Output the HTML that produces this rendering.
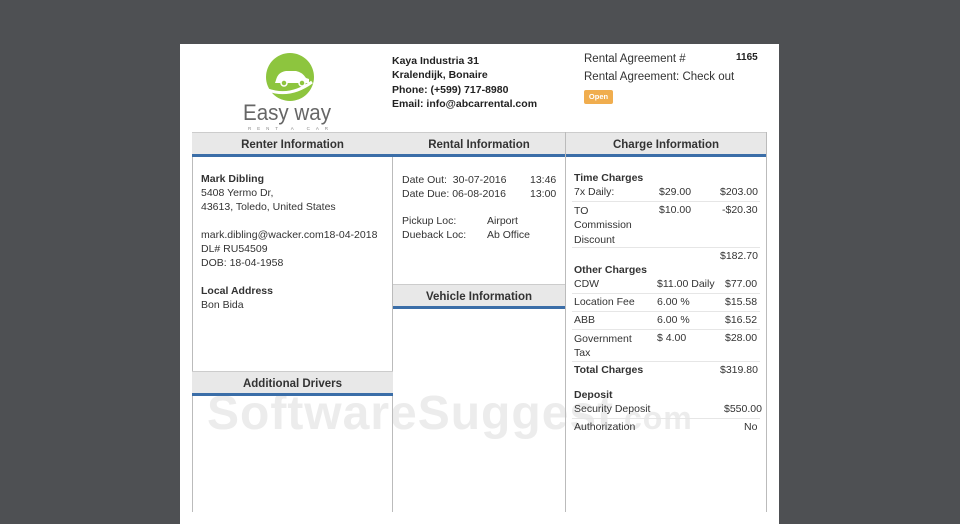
<!DOCTYPE html>
<html><head><style>
*{margin:0;padding:0;box-sizing:border-box}
body{width:960px;height:512px;background:#4e5053;position:relative;overflow:hidden;font-family:"Liberation Sans",sans-serif;color:#333;font-size:10.5px}
.page{position:absolute;left:180px;top:44px;width:599px;height:480px;background:#fff}
.a{position:absolute;white-space:nowrap}
.b{font-weight:bold}
.hd{position:absolute;height:25px;background:#e8e8e8;border-bottom:3px solid #3b6ea8;font-weight:bold;font-size:11.5px;text-align:center;line-height:24px;color:#333;border-top:1px solid #ccc}
.vl{position:absolute;width:1px;background:#bbb}
.hl{position:absolute;height:1px;background:#e6e6e6}
</style></head><body>
<div class="page"></div>
<!-- watermark -->
<div class="a b" style="left:207px;top:386px;font-size:48px;color:#ececec;letter-spacing:1px">SoftwareSuggest<span style="font-size:32px">.com</span></div>
<!-- logo -->
<svg class="a" style="left:240px;top:52px" width="96" height="80" viewBox="0 0 96 80">
<circle cx="50" cy="25" r="24" fill="#8dc53e"/>
<path d="M36 28 q2-8 10-9 h10 q6 1 10 7 l3 1 v4 h-34 z" fill="#fff"/>
<circle cx="44" cy="31" r="3" fill="#8dc53e" stroke="#fff" stroke-width="1.5"/>
<circle cx="62" cy="31" r="3" fill="#8dc53e" stroke="#fff" stroke-width="1.5"/>
<path d="M28 38 q22 8 44-8" stroke="#fff" stroke-width="3" fill="none"/>
<text x="3" y="68" font-family="Liberation Sans" font-size="22" fill="#666" textLength="88" lengthAdjust="spacingAndGlyphs">Easy way</text>
<text x="8" y="78" font-family="Liberation Sans" font-size="4.5" fill="#888" textLength="80">RENT A CAR</text>
</svg>
<div class="a b" style="left:392px;top:54px;line-height:14.3px;font-size:10.5px;color:#222">Kaya Industria 31<br>Kralendijk, Bonaire<br>Phone: (+599) 717-8980<br>Email: info@abcarrental.com</div>
<div class="a" style="left:584px;top:53px;font-size:11.5px;color:#333">Rental Agreement #</div>
<div class="a b" style="left:736px;top:52px;font-size:10px;color:#222">1165</div>
<div class="a" style="left:584px;top:71px;font-size:11.5px;color:#333">Rental Agreement: Check out</div>
<div class="a" style="left:584px;top:90px;width:29px;height:14px;background:#f0ad4e;border-radius:2px;color:#fff;font-size:7.5px;font-weight:bold;text-align:center;line-height:14px">Open</div>
<!-- column lines -->
<div class="vl" style="left:192px;top:132px;height:380px"></div>
<div class="vl" style="left:392px;top:132px;height:380px"></div>
<div class="vl" style="left:565px;top:132px;height:380px"></div>
<div class="vl" style="left:766px;top:132px;height:380px"></div>
<div class="hd" style="left:192px;top:132px;width:201px">Renter Information</div>
<div class="hd" style="left:393px;top:132px;width:172px">Rental Information</div>
<div class="hd" style="left:566px;top:132px;width:200px">Charge Information</div>
<div class="hd" style="left:393px;top:284px;width:172px">Vehicle Information</div>
<div class="hd" style="left:192px;top:371px;width:201px">Additional Drivers</div>
<!-- renter -->
<div class="a" style="left:201px;top:172px;line-height:14px">
<span class="b">Mark Dibling</span><br>5408 Yermo Dr,<br>43613, Toledo, United States<br><br>mark.dibling@wacker.com18-04-2018<br>DL# RU54509<br>DOB: 18-04-1958<br><br><span class="b">Local Address</span><br>Bon Bida</div>
<!-- rental -->
<div class="a" style="left:402px;top:173px;line-height:14px">Date Out:&nbsp; 30-07-2016<br>Date Due: 06-08-2016</div>
<div class="a" style="left:530px;top:173px;line-height:14px">13:46<br>13:00</div>
<div class="a" style="left:402px;top:214px;line-height:14px">Pickup Loc:<br>Dueback Loc:</div>
<div class="a" style="left:487px;top:214px;line-height:14px">Airport<br>Ab Office</div>
<!-- charges -->
<div class="a b" style="left:574px;top:172px">Time Charges</div>
<div class="a" style="left:574px;top:186px">7x Daily:</div><div class="a" style="left:659px;top:186px">$29.00</div><div class="a" style="left:720px;top:186px">$203.00</div>
<div class="hl" style="left:572px;top:201px;width:188px"></div>
<div class="a" style="left:574px;top:204px;line-height:14.3px">TO<br>Commission<br>Discount</div><div class="a" style="left:659px;top:204px">$10.00</div><div class="a" style="left:722px;top:204px">-$20.30</div>
<div class="hl" style="left:572px;top:247px;width:188px"></div>
<div class="a" style="left:720px;top:250px">$182.70</div>
<div class="a b" style="left:574px;top:264px">Other Charges</div>
<div class="a" style="left:574px;top:278px">CDW</div><div class="a" style="left:657px;top:278px">$11.00 Daily</div><div class="a" style="left:725px;top:278px">$77.00</div>
<div class="hl" style="left:572px;top:293px;width:188px"></div>
<div class="a" style="left:574px;top:296px">Location Fee</div><div class="a" style="left:657px;top:296px">6.00 %</div><div class="a" style="left:725px;top:296px">$15.58</div>
<div class="hl" style="left:572px;top:311px;width:188px"></div>
<div class="a" style="left:574px;top:314px">ABB</div><div class="a" style="left:657px;top:314px">6.00 %</div><div class="a" style="left:725px;top:314px">$16.52</div>
<div class="hl" style="left:572px;top:329px;width:188px"></div>
<div class="a" style="left:574px;top:332px;line-height:14.3px">Government<br>Tax</div><div class="a" style="left:657px;top:332px">$ 4.00</div><div class="a" style="left:725px;top:332px">$28.00</div>
<div class="hl" style="left:572px;top:361px;width:188px"></div>
<div class="a b" style="left:574px;top:364px">Total Charges</div><div class="a" style="left:720px;top:364px">$319.80</div>
<div class="a b" style="left:574px;top:389px">Deposit</div>
<div class="a" style="left:574px;top:403px">Security Deposit</div><div class="a" style="left:724px;top:403px">$550.00</div>
<div class="hl" style="left:572px;top:418px;width:188px"></div>
<div class="a" style="left:574px;top:421px">Authorization</div><div class="a" style="left:744px;top:421px">No</div>
</body></html>
